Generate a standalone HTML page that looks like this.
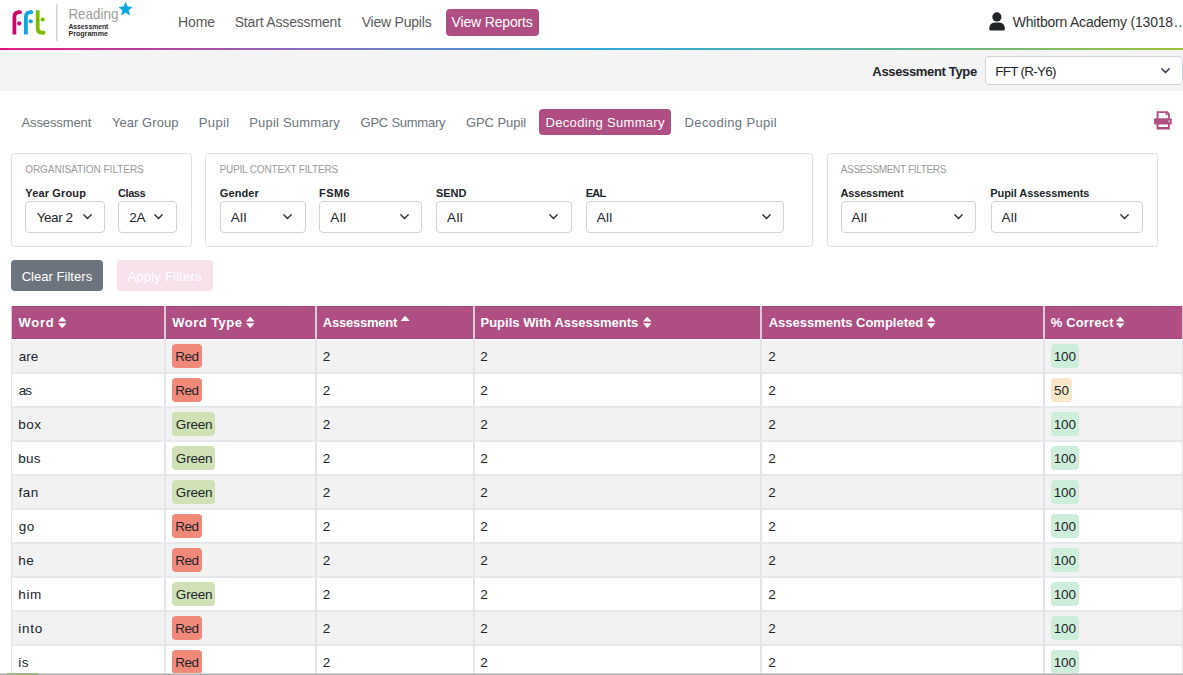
<!DOCTYPE html>
<html><head><meta charset="utf-8"><title>Decoding Summary</title><style>
*{box-sizing:border-box}
html,body{margin:0;padding:0;width:1183px;height:675px;overflow:hidden;background:#fff;font-family:"Liberation Sans",sans-serif}
.t{position:absolute;white-space:nowrap}
.a{position:absolute}
.box{position:absolute;border:1px solid #dee2e6;border-radius:4px;background:#fff}
.sel{position:absolute;border:1px solid #ced4da;border-radius:4px;background:#fff}
.chev{position:absolute;width:9px;height:6px}
.badge{position:absolute;border-radius:4px;height:24px}
</style></head><body>
<svg class="a" style="left:0;top:0" width="140" height="46" viewBox="0 0 140 46">
<g fill="none" stroke-width="3.8">
<path d="M14.4 34.6 L14.4 17 Q14.4 12.2 19.2 12.2 L20 12.2" stroke="#d5006f"/>
<path d="M25.9 34.6 L25.9 17 Q25.9 12.2 30.7 12.2 L31.3 12.2" stroke="#12a6e0"/>
<path d="M37.7 10.3 L37.7 28.5 Q37.7 32.7 41.9 32.7 L43.5 32.7" stroke="#7cba00"/>
</g>
<circle cx="20" cy="12.2" r="1.9" fill="#d5006f"/><circle cx="31.3" cy="12.2" r="1.9" fill="#12a6e0"/><circle cx="43.5" cy="32.7" r="1.9" fill="#7cba00"/>
<circle cx="19.2" cy="23.4" r="2.1" fill="#d5006f"/>
<circle cx="30.8" cy="21.3" r="2.1" fill="#12a6e0"/>
<circle cx="42.6" cy="19.5" r="2.1" fill="#7cba00"/>
<rect x="56" y="3.5" width="1.6" height="37.6" fill="#d6d6d6"/>
<text x="68.4" y="18.6" font-family="Liberation Sans" font-size="14.2" fill="#9c9c9c" textLength="50" lengthAdjust="spacingAndGlyphs">Reading</text>
<text x="68.4" y="28.5" font-family="Liberation Sans" font-size="6.6" font-weight="700" fill="#2a2a2a" textLength="40" lengthAdjust="spacingAndGlyphs">Assessment</text>
<text x="68.4" y="35.8" font-family="Liberation Sans" font-size="6.6" font-weight="700" fill="#2a2a2a" textLength="39.6" lengthAdjust="spacingAndGlyphs">Programme</text>
<path d="M125.60 2.40 L127.42 6.79 L132.16 7.17 L128.55 10.26 L129.66 14.88 L125.60 12.40 L121.54 14.88 L122.65 10.26 L119.04 7.17 L123.78 6.79 Z" fill="#0aa5e0" stroke="#0aa5e0" stroke-width="0.6" stroke-linejoin="round"/>
</svg>
<div class="a" style="left:445.5px;top:9.1px;width:93.3px;height:26.6px;background:#ae4e82;border-radius:4px"></div>
<svg class="a" style="left:988px;top:12px" width="18" height="20" viewBox="0 0 18 20">
<circle cx="8.9" cy="4.9" r="4.6" fill="#212529"/>
<path d="M1.2 17 Q1.2 10.6 7 10.5 L11 10.5 Q16.9 10.6 16.9 17 Q16.9 18.6 15.4 18.6 L2.7 18.6 Q1.2 18.6 1.2 17 Z" fill="#212529"/></svg>
<div class="a" style="left:0;top:48px;width:1183px;height:2px;background:linear-gradient(90deg,#e0187f 0%,#8d6cb8 25%,#2ea9dd 50%,#5fb395 76%,#9dc23a 100%)"></div>
<div class="a" style="left:0;top:50px;width:1183px;height:41px;background:#f4f4f4"></div>
<div class="sel" style="left:984.8px;top:56px;width:198px;height:28.5px"></div>
<svg class="chev" style="left:1160.5px;top:68px" viewBox="0 0 9 6"><path d="M0.8 0.8 L4.5 4.6 L8.2 0.8" fill="none" stroke="#343a40" stroke-width="1.5" stroke-linecap="round" stroke-linejoin="round"/></svg>
<div class="a" style="left:539px;top:109px;width:132px;height:26px;background:#ae4e82;border-radius:4px"></div>
<svg class="a" style="left:1153px;top:110px" width="20" height="20" viewBox="0 0 20 20">
<g fill="#ae4e82">
<path d="M3.6 1.2 L14.4 1.2 L16.8 3.6 L16.8 8.6 L14.9 8.6 L14.9 4.4 L13.8 3.1 L5.5 3.1 L5.5 8.6 L3.6 8.6 Z"/>
<rect x="12.6" y="3.1" width="1.9" height="2.1"/>
<rect x="1.1" y="8.3" width="17.6" height="6.2" rx="1"/>
<path d="M3.6 14 L5.5 14 L5.5 17 L14.9 17 L14.9 14 L16.8 14 L16.8 19.4 L3.6 19.4 Z"/>
</g>
<circle cx="16.2" cy="11.2" r="0.8" fill="#fff"/>
</svg>
<div class="box" style="left:11px;top:153px;width:181px;height:94px"></div>
<div class="box" style="left:205px;top:153px;width:608px;height:94px"></div>
<div class="box" style="left:826.5px;top:153px;width:331.5px;height:94px"></div>
<div class="sel" style="left:25.2px;top:201px;width:80.0px;height:32px"></div>
<svg class="chev" style="left:82.7px;top:214px" viewBox="0 0 9 6"><path d="M0.8 0.8 L4.5 4.6 L8.2 0.8" fill="none" stroke="#343a40" stroke-width="1.5" stroke-linecap="round" stroke-linejoin="round"/></svg>
<div class="sel" style="left:118.3px;top:201px;width:58.4px;height:32px"></div>
<svg class="chev" style="left:154.2px;top:214px" viewBox="0 0 9 6"><path d="M0.8 0.8 L4.5 4.6 L8.2 0.8" fill="none" stroke="#343a40" stroke-width="1.5" stroke-linecap="round" stroke-linejoin="round"/></svg>
<div class="sel" style="left:220px;top:201px;width:85.5px;height:32px"></div>
<svg class="chev" style="left:283.0px;top:214px" viewBox="0 0 9 6"><path d="M0.8 0.8 L4.5 4.6 L8.2 0.8" fill="none" stroke="#343a40" stroke-width="1.5" stroke-linecap="round" stroke-linejoin="round"/></svg>
<div class="sel" style="left:319.3px;top:201px;width:102.9px;height:32px"></div>
<svg class="chev" style="left:399.7px;top:214px" viewBox="0 0 9 6"><path d="M0.8 0.8 L4.5 4.6 L8.2 0.8" fill="none" stroke="#343a40" stroke-width="1.5" stroke-linecap="round" stroke-linejoin="round"/></svg>
<div class="sel" style="left:436.3px;top:201px;width:135.4px;height:32px"></div>
<svg class="chev" style="left:549.2px;top:214px" viewBox="0 0 9 6"><path d="M0.8 0.8 L4.5 4.6 L8.2 0.8" fill="none" stroke="#343a40" stroke-width="1.5" stroke-linecap="round" stroke-linejoin="round"/></svg>
<div class="sel" style="left:586.2px;top:201px;width:197.8px;height:32px"></div>
<svg class="chev" style="left:761.5px;top:214px" viewBox="0 0 9 6"><path d="M0.8 0.8 L4.5 4.6 L8.2 0.8" fill="none" stroke="#343a40" stroke-width="1.5" stroke-linecap="round" stroke-linejoin="round"/></svg>
<div class="sel" style="left:840.9px;top:201px;width:135.6px;height:32px"></div>
<svg class="chev" style="left:954.0px;top:214px" viewBox="0 0 9 6"><path d="M0.8 0.8 L4.5 4.6 L8.2 0.8" fill="none" stroke="#343a40" stroke-width="1.5" stroke-linecap="round" stroke-linejoin="round"/></svg>
<div class="sel" style="left:990.9px;top:201px;width:151.9px;height:32px"></div>
<svg class="chev" style="left:1120.3px;top:214px" viewBox="0 0 9 6"><path d="M0.8 0.8 L4.5 4.6 L8.2 0.8" fill="none" stroke="#343a40" stroke-width="1.5" stroke-linecap="round" stroke-linejoin="round"/></svg>
<div class="a" style="left:11px;top:259.7px;width:92px;height:31.5px;background:#6c757d;border-radius:4px"></div>
<div class="a" style="left:116.7px;top:259.7px;width:96.2px;height:31.5px;background:#f7e2ec;border-radius:4px"></div>
<div class="a" style="left:11.5px;top:305.5px;width:1171px;height:33.5px;background:#ae4e82;border-top:1px solid #a9457a;border-bottom:1.5px solid #a9457a"></div>
<div class="a" style="left:12px;top:340px;width:1170px;height:34px;background:#f2f2f2;border-bottom:2px solid #e7e8eb"></div>
<div class="badge" style="left:172px;top:344px;width:30px;background:#f0897a"></div>
<div class="badge" style="left:1051px;top:344px;width:28px;background:#ceeedc"></div>
<div class="a" style="left:12px;top:374px;width:1170px;height:34px;background:#fff;border-bottom:2px solid #e7e8eb"></div>
<div class="badge" style="left:172px;top:378px;width:30px;background:#f0897a"></div>
<div class="badge" style="left:1051px;top:378px;width:21px;background:#f8e6c9"></div>
<div class="a" style="left:12px;top:408px;width:1170px;height:34px;background:#f2f2f2;border-bottom:2px solid #e7e8eb"></div>
<div class="badge" style="left:172px;top:412px;width:43.4px;background:#d1e1b6"></div>
<div class="badge" style="left:1051px;top:412px;width:28px;background:#ceeedc"></div>
<div class="a" style="left:12px;top:442px;width:1170px;height:34px;background:#fff;border-bottom:2px solid #e7e8eb"></div>
<div class="badge" style="left:172px;top:446px;width:43.4px;background:#d1e1b6"></div>
<div class="badge" style="left:1051px;top:446px;width:28px;background:#ceeedc"></div>
<div class="a" style="left:12px;top:476px;width:1170px;height:34px;background:#f2f2f2;border-bottom:2px solid #e7e8eb"></div>
<div class="badge" style="left:172px;top:480px;width:43.4px;background:#d1e1b6"></div>
<div class="badge" style="left:1051px;top:480px;width:28px;background:#ceeedc"></div>
<div class="a" style="left:12px;top:510px;width:1170px;height:34px;background:#fff;border-bottom:2px solid #e7e8eb"></div>
<div class="badge" style="left:172px;top:514px;width:30px;background:#f0897a"></div>
<div class="badge" style="left:1051px;top:514px;width:28px;background:#ceeedc"></div>
<div class="a" style="left:12px;top:544px;width:1170px;height:34px;background:#f2f2f2;border-bottom:2px solid #e7e8eb"></div>
<div class="badge" style="left:172px;top:548px;width:30px;background:#f0897a"></div>
<div class="badge" style="left:1051px;top:548px;width:28px;background:#ceeedc"></div>
<div class="a" style="left:12px;top:578px;width:1170px;height:34px;background:#fff;border-bottom:2px solid #e7e8eb"></div>
<div class="badge" style="left:172px;top:582px;width:43.4px;background:#d1e1b6"></div>
<div class="badge" style="left:1051px;top:582px;width:28px;background:#ceeedc"></div>
<div class="a" style="left:12px;top:612px;width:1170px;height:34px;background:#f2f2f2;border-bottom:2px solid #e7e8eb"></div>
<div class="badge" style="left:172px;top:616px;width:30px;background:#f0897a"></div>
<div class="badge" style="left:1051px;top:616px;width:28px;background:#ceeedc"></div>
<div class="a" style="left:12px;top:646px;width:1170px;height:34px;background:#fff;border-bottom:2px solid #e7e8eb"></div>
<div class="badge" style="left:172px;top:650px;width:30px;background:#f0897a"></div>
<div class="badge" style="left:1051px;top:650px;width:28px;background:#ceeedc"></div>
<div class="a" style="left:11px;top:306px;width:1px;height:33px;background:#d8cbd2"></div>
<div class="a" style="left:11px;top:339px;width:1px;height:336px;background:#e4e5e8"></div>
<div class="a" style="left:164px;top:306px;width:2px;height:33px;background:#d8cbd2"></div>
<div class="a" style="left:164px;top:339px;width:2px;height:336px;background:#e4e5e8"></div>
<div class="a" style="left:315px;top:306px;width:2px;height:33px;background:#d8cbd2"></div>
<div class="a" style="left:315px;top:339px;width:2px;height:336px;background:#e4e5e8"></div>
<div class="a" style="left:473px;top:306px;width:2px;height:33px;background:#d8cbd2"></div>
<div class="a" style="left:473px;top:339px;width:2px;height:336px;background:#e4e5e8"></div>
<div class="a" style="left:760px;top:306px;width:2px;height:33px;background:#d8cbd2"></div>
<div class="a" style="left:760px;top:339px;width:2px;height:336px;background:#e4e5e8"></div>
<div class="a" style="left:1043px;top:306px;width:2px;height:33px;background:#d8cbd2"></div>
<div class="a" style="left:1043px;top:339px;width:2px;height:336px;background:#e4e5e8"></div>
<div class="a" style="left:1182px;top:306px;width:1px;height:33px;background:#d8cbd2"></div>
<div class="a" style="left:1182px;top:339px;width:1px;height:336px;background:#e4e5e8"></div>
<svg class="a" style="left:58.0px;top:316.6px" width="8.4" height="11" viewBox="0 0 8.4 11"><path d="M3.6 0.3 Q4.2 -0.3 4.8 0.3 L8.3 4.2 Q8.6 4.6 8 4.6 L0.4 4.6 Q-0.2 4.6 0.1 4.2 Z M0.4 6.2 L8 6.2 Q8.6 6.2 8.3 6.6 L4.8 10.5 Q4.2 11.1 3.6 10.5 L0.1 6.6 Q-0.2 6.2 0.4 6.2 Z" fill="#fff"/></svg>
<svg class="a" style="left:246.2px;top:316.6px" width="8.4" height="11" viewBox="0 0 8.4 11"><path d="M3.6 0.3 Q4.2 -0.3 4.8 0.3 L8.3 4.2 Q8.6 4.6 8 4.6 L0.4 4.6 Q-0.2 4.6 0.1 4.2 Z M0.4 6.2 L8 6.2 Q8.6 6.2 8.3 6.6 L4.8 10.5 Q4.2 11.1 3.6 10.5 L0.1 6.6 Q-0.2 6.2 0.4 6.2 Z" fill="#fff"/></svg>
<svg class="a" style="left:642.8px;top:316.6px" width="8.4" height="11" viewBox="0 0 8.4 11"><path d="M3.6 0.3 Q4.2 -0.3 4.8 0.3 L8.3 4.2 Q8.6 4.6 8 4.6 L0.4 4.6 Q-0.2 4.6 0.1 4.2 Z M0.4 6.2 L8 6.2 Q8.6 6.2 8.3 6.6 L4.8 10.5 Q4.2 11.1 3.6 10.5 L0.1 6.6 Q-0.2 6.2 0.4 6.2 Z" fill="#fff"/></svg>
<svg class="a" style="left:927.3px;top:316.6px" width="8.4" height="11" viewBox="0 0 8.4 11"><path d="M3.6 0.3 Q4.2 -0.3 4.8 0.3 L8.3 4.2 Q8.6 4.6 8 4.6 L0.4 4.6 Q-0.2 4.6 0.1 4.2 Z M0.4 6.2 L8 6.2 Q8.6 6.2 8.3 6.6 L4.8 10.5 Q4.2 11.1 3.6 10.5 L0.1 6.6 Q-0.2 6.2 0.4 6.2 Z" fill="#fff"/></svg>
<svg class="a" style="left:1116.4px;top:316.6px" width="8.4" height="11" viewBox="0 0 8.4 11"><path d="M3.6 0.3 Q4.2 -0.3 4.8 0.3 L8.3 4.2 Q8.6 4.6 8 4.6 L0.4 4.6 Q-0.2 4.6 0.1 4.2 Z M0.4 6.2 L8 6.2 Q8.6 6.2 8.3 6.6 L4.8 10.5 Q4.2 11.1 3.6 10.5 L0.1 6.6 Q-0.2 6.2 0.4 6.2 Z" fill="#fff"/></svg>
<svg class="a" style="left:401.2px;top:316.4px" width="8.4" height="5.4" viewBox="0 0 8.4 5.4"><path d="M3.6 0.3 Q4.2 -0.3 4.8 0.3 L8.3 4.6 Q8.6 5.1 8 5.1 L0.4 5.1 Q-0.2 5.1 0.1 4.6 Z" fill="#fff"/></svg>
<div class="a" style="left:0;top:673px;width:1183px;height:1px;background:#d6d6d6"></div>
<div class="a" style="left:0;top:674px;width:1183px;height:1px;background:#ababab"></div>
<div class="a" style="left:7px;top:673px;width:30.5px;height:2px;background:#a2b784"></div>
<div class="t" style="left:177.92px;top:14.75px;font-size:14px;line-height:14px;font-weight:400;color:#5a5a5a;letter-spacing:-0.059px">Home</div>
<div class="t" style="left:234.68px;top:14.75px;font-size:14px;line-height:14px;font-weight:400;color:#5a5a5a;letter-spacing:-0.171px">Start Assessment</div>
<div class="t" style="left:361.66px;top:14.75px;font-size:14px;line-height:14px;font-weight:400;color:#5a5a5a;letter-spacing:-0.211px">View Pupils</div>
<div class="t" style="left:451.58px;top:14.75px;font-size:14px;line-height:14px;font-weight:400;color:#fff;letter-spacing:-0.167px">View Reports</div>
<div class="t" style="left:1012.78px;top:14.95px;font-size:14px;line-height:14px;font-weight:400;color:#333;letter-spacing:-0.213px">Whitborn Academy (13018</div>
<div class="t" style="left:1173.90px;top:14.95px;font-size:14px;line-height:14px;font-weight:400;color:#333;letter-spacing:0.600px">...</div>
<div class="t" style="left:872.36px;top:64.70px;font-size:13px;line-height:13px;font-weight:700;color:#212529;letter-spacing:-0.342px">Assessment Type</div>
<div class="t" style="left:995.26px;top:65.27px;font-size:13.5px;line-height:13.5px;font-weight:400;color:#212529;letter-spacing:-0.740px">FFT (R-Y6)</div>
<div class="t" style="left:21.47px;top:116.00px;font-size:13px;line-height:13px;font-weight:400;color:#6c757d;letter-spacing:-0.104px">Assessment</div>
<div class="t" style="left:112.03px;top:116.00px;font-size:13px;line-height:13px;font-weight:400;color:#6c757d;letter-spacing:0.046px">Year Group</div>
<div class="t" style="left:198.78px;top:116.00px;font-size:13px;line-height:13px;font-weight:400;color:#6c757d;letter-spacing:0.381px">Pupil</div>
<div class="t" style="left:249.22px;top:116.00px;font-size:13px;line-height:13px;font-weight:400;color:#6c757d;letter-spacing:0.209px">Pupil Summary</div>
<div class="t" style="left:360.58px;top:116.00px;font-size:13px;line-height:13px;font-weight:400;color:#6c757d;letter-spacing:-0.246px">GPC Summary</div>
<div class="t" style="left:465.96px;top:116.00px;font-size:13px;line-height:13px;font-weight:400;color:#6c757d;letter-spacing:-0.069px">GPC Pupil</div>
<div class="t" style="left:545.55px;top:116.00px;font-size:13px;line-height:13px;font-weight:400;color:#fff;letter-spacing:0.319px">Decoding Summary</div>
<div class="t" style="left:684.59px;top:116.00px;font-size:13px;line-height:13px;font-weight:400;color:#6c757d;letter-spacing:0.363px">Decoding Pupil</div>
<div class="t" style="left:25.15px;top:165.44px;font-size:10px;line-height:10px;font-weight:400;color:#999;letter-spacing:-0.024px">ORGANISATION FILTERS</div>
<div class="t" style="left:219.41px;top:165.44px;font-size:10px;line-height:10px;font-weight:400;color:#999;letter-spacing:-0.167px">PUPIL CONTEXT FILTERS</div>
<div class="t" style="left:840.75px;top:165.44px;font-size:10px;line-height:10px;font-weight:400;color:#999;letter-spacing:-0.333px">ASSESSMENT FILTERS</div>
<div class="t" style="left:25.25px;top:188.29px;font-size:11px;line-height:11px;font-weight:700;color:#212529;letter-spacing:0.149px">Year Group</div>
<div class="t" style="left:118.12px;top:188.29px;font-size:11px;line-height:11px;font-weight:700;color:#212529;letter-spacing:-0.479px">Class</div>
<div class="t" style="left:219.77px;top:188.29px;font-size:11px;line-height:11px;font-weight:700;color:#212529;letter-spacing:0.109px">Gender</div>
<div class="t" style="left:319.02px;top:188.29px;font-size:11px;line-height:11px;font-weight:700;color:#212529;letter-spacing:0.424px">FSM6</div>
<div class="t" style="left:436.02px;top:188.29px;font-size:11px;line-height:11px;font-weight:700;color:#212529;letter-spacing:-0.065px">SEND</div>
<div class="t" style="left:585.63px;top:188.29px;font-size:11px;line-height:11px;font-weight:700;color:#212529;letter-spacing:-0.677px">EAL</div>
<div class="t" style="left:840.59px;top:188.29px;font-size:11px;line-height:11px;font-weight:700;color:#212529;letter-spacing:-0.205px">Assessment</div>
<div class="t" style="left:990.26px;top:188.29px;font-size:11px;line-height:11px;font-weight:700;color:#212529;letter-spacing:-0.086px">Pupil Assessments</div>
<div class="t" style="left:36.71px;top:210.57px;font-size:13.5px;line-height:13.5px;font-weight:400;color:#212529;letter-spacing:-0.438px">Year 2</div>
<div class="t" style="left:129.14px;top:210.57px;font-size:13.5px;line-height:13.5px;font-weight:400;color:#212529;letter-spacing:-0.070px">2A</div>
<div class="t" style="left:230.69px;top:210.57px;font-size:13.5px;line-height:13.5px;font-weight:400;color:#212529;letter-spacing:0.398px">All</div>
<div class="t" style="left:330.18px;top:210.57px;font-size:13.5px;line-height:13.5px;font-weight:400;color:#212529;letter-spacing:0.469px">All</div>
<div class="t" style="left:447.01px;top:210.57px;font-size:13.5px;line-height:13.5px;font-weight:400;color:#212529;letter-spacing:0.410px">All</div>
<div class="t" style="left:596.66px;top:210.57px;font-size:13.5px;line-height:13.5px;font-weight:400;color:#212529;letter-spacing:0.329px">All</div>
<div class="t" style="left:851.43px;top:210.57px;font-size:13.5px;line-height:13.5px;font-weight:400;color:#212529;letter-spacing:0.239px">All</div>
<div class="t" style="left:1001.43px;top:210.57px;font-size:13.5px;line-height:13.5px;font-weight:400;color:#212529;letter-spacing:0.239px">All</div>
<div class="t" style="left:21.65px;top:269.70px;font-size:13px;line-height:13px;font-weight:400;color:#fff;letter-spacing:0.035px">Clear Filters</div>
<div class="t" style="left:127.47px;top:269.70px;font-size:13px;line-height:13px;font-weight:400;color:#fff;letter-spacing:0.219px">Apply Filters</div>
<div class="t" style="left:18.57px;top:315.80px;font-size:13px;line-height:13px;font-weight:700;color:#fff;letter-spacing:0.700px">Word</div>
<div class="t" style="left:172.24px;top:315.80px;font-size:13px;line-height:13px;font-weight:700;color:#fff;letter-spacing:0.462px">Word Type</div>
<div class="t" style="left:322.77px;top:315.80px;font-size:13px;line-height:13px;font-weight:700;color:#fff;letter-spacing:-0.231px">Assessment</div>
<div class="t" style="left:480.49px;top:315.80px;font-size:13px;line-height:13px;font-weight:700;color:#fff;letter-spacing:0.011px">Pupils With Assessments</div>
<div class="t" style="left:768.71px;top:315.80px;font-size:13px;line-height:13px;font-weight:700;color:#fff;letter-spacing:-0.008px">Assessments Completed</div>
<div class="t" style="left:1050.64px;top:315.80px;font-size:13px;line-height:13px;font-weight:700;color:#fff;letter-spacing:0.185px">% Correct</div>
<div class="t" style="left:18.65px;top:349.77px;font-size:13.5px;line-height:13.5px;font-weight:400;color:#212529;letter-spacing:0.105px">are</div>
<div class="t" style="left:175.32px;top:349.77px;font-size:13.5px;line-height:13.5px;font-weight:400;color:#212529;letter-spacing:-0.498px">Red</div>
<div class="t" style="left:322.64px;top:349.77px;font-size:13.5px;line-height:13.5px;font-weight:400;color:#212529;letter-spacing:0.000px">2</div>
<div class="t" style="left:480.34px;top:349.77px;font-size:13.5px;line-height:13.5px;font-weight:400;color:#212529;letter-spacing:0.000px">2</div>
<div class="t" style="left:768.34px;top:349.77px;font-size:13.5px;line-height:13.5px;font-weight:400;color:#212529;letter-spacing:0.000px">2</div>
<div class="t" style="left:1053.65px;top:349.77px;font-size:13.5px;line-height:13.5px;font-weight:400;color:#212529;letter-spacing:-0.062px">100</div>
<div class="t" style="left:18.65px;top:383.77px;font-size:13.5px;line-height:13.5px;font-weight:400;color:#212529;letter-spacing:-0.900px">as</div>
<div class="t" style="left:175.32px;top:383.77px;font-size:13.5px;line-height:13.5px;font-weight:400;color:#212529;letter-spacing:-0.498px">Red</div>
<div class="t" style="left:322.64px;top:383.77px;font-size:13.5px;line-height:13.5px;font-weight:400;color:#212529;letter-spacing:0.000px">2</div>
<div class="t" style="left:480.34px;top:383.77px;font-size:13.5px;line-height:13.5px;font-weight:400;color:#212529;letter-spacing:0.000px">2</div>
<div class="t" style="left:768.34px;top:383.77px;font-size:13.5px;line-height:13.5px;font-weight:400;color:#212529;letter-spacing:0.000px">2</div>
<div class="t" style="left:1053.91px;top:383.77px;font-size:13.5px;line-height:13.5px;font-weight:400;color:#212529;letter-spacing:0.149px">50</div>
<div class="t" style="left:18.35px;top:417.77px;font-size:13.5px;line-height:13.5px;font-weight:400;color:#212529;letter-spacing:0.493px">box</div>
<div class="t" style="left:175.87px;top:417.77px;font-size:13.5px;line-height:13.5px;font-weight:400;color:#212529;letter-spacing:-0.220px">Green</div>
<div class="t" style="left:322.64px;top:417.77px;font-size:13.5px;line-height:13.5px;font-weight:400;color:#212529;letter-spacing:0.000px">2</div>
<div class="t" style="left:480.34px;top:417.77px;font-size:13.5px;line-height:13.5px;font-weight:400;color:#212529;letter-spacing:0.000px">2</div>
<div class="t" style="left:768.34px;top:417.77px;font-size:13.5px;line-height:13.5px;font-weight:400;color:#212529;letter-spacing:0.000px">2</div>
<div class="t" style="left:1053.65px;top:417.77px;font-size:13.5px;line-height:13.5px;font-weight:400;color:#212529;letter-spacing:-0.062px">100</div>
<div class="t" style="left:18.35px;top:451.77px;font-size:13.5px;line-height:13.5px;font-weight:400;color:#212529;letter-spacing:0.173px">bus</div>
<div class="t" style="left:175.87px;top:451.77px;font-size:13.5px;line-height:13.5px;font-weight:400;color:#212529;letter-spacing:-0.220px">Green</div>
<div class="t" style="left:322.64px;top:451.77px;font-size:13.5px;line-height:13.5px;font-weight:400;color:#212529;letter-spacing:0.000px">2</div>
<div class="t" style="left:480.34px;top:451.77px;font-size:13.5px;line-height:13.5px;font-weight:400;color:#212529;letter-spacing:0.000px">2</div>
<div class="t" style="left:768.34px;top:451.77px;font-size:13.5px;line-height:13.5px;font-weight:400;color:#212529;letter-spacing:0.000px">2</div>
<div class="t" style="left:1053.65px;top:451.77px;font-size:13.5px;line-height:13.5px;font-weight:400;color:#212529;letter-spacing:-0.062px">100</div>
<div class="t" style="left:18.47px;top:485.77px;font-size:13.5px;line-height:13.5px;font-weight:400;color:#212529;letter-spacing:0.557px">fan</div>
<div class="t" style="left:175.87px;top:485.77px;font-size:13.5px;line-height:13.5px;font-weight:400;color:#212529;letter-spacing:-0.220px">Green</div>
<div class="t" style="left:322.64px;top:485.77px;font-size:13.5px;line-height:13.5px;font-weight:400;color:#212529;letter-spacing:0.000px">2</div>
<div class="t" style="left:480.34px;top:485.77px;font-size:13.5px;line-height:13.5px;font-weight:400;color:#212529;letter-spacing:0.000px">2</div>
<div class="t" style="left:768.34px;top:485.77px;font-size:13.5px;line-height:13.5px;font-weight:400;color:#212529;letter-spacing:0.000px">2</div>
<div class="t" style="left:1053.65px;top:485.77px;font-size:13.5px;line-height:13.5px;font-weight:400;color:#212529;letter-spacing:-0.062px">100</div>
<div class="t" style="left:18.66px;top:519.77px;font-size:13.5px;line-height:13.5px;font-weight:400;color:#212529;letter-spacing:0.700px">go</div>
<div class="t" style="left:175.32px;top:519.77px;font-size:13.5px;line-height:13.5px;font-weight:400;color:#212529;letter-spacing:-0.498px">Red</div>
<div class="t" style="left:322.64px;top:519.77px;font-size:13.5px;line-height:13.5px;font-weight:400;color:#212529;letter-spacing:0.000px">2</div>
<div class="t" style="left:480.34px;top:519.77px;font-size:13.5px;line-height:13.5px;font-weight:400;color:#212529;letter-spacing:0.000px">2</div>
<div class="t" style="left:768.34px;top:519.77px;font-size:13.5px;line-height:13.5px;font-weight:400;color:#212529;letter-spacing:0.000px">2</div>
<div class="t" style="left:1053.65px;top:519.77px;font-size:13.5px;line-height:13.5px;font-weight:400;color:#212529;letter-spacing:-0.062px">100</div>
<div class="t" style="left:18.27px;top:553.77px;font-size:13.5px;line-height:13.5px;font-weight:400;color:#212529;letter-spacing:0.516px">he</div>
<div class="t" style="left:175.32px;top:553.77px;font-size:13.5px;line-height:13.5px;font-weight:400;color:#212529;letter-spacing:-0.498px">Red</div>
<div class="t" style="left:322.64px;top:553.77px;font-size:13.5px;line-height:13.5px;font-weight:400;color:#212529;letter-spacing:0.000px">2</div>
<div class="t" style="left:480.34px;top:553.77px;font-size:13.5px;line-height:13.5px;font-weight:400;color:#212529;letter-spacing:0.000px">2</div>
<div class="t" style="left:768.34px;top:553.77px;font-size:13.5px;line-height:13.5px;font-weight:400;color:#212529;letter-spacing:0.000px">2</div>
<div class="t" style="left:1053.65px;top:553.77px;font-size:13.5px;line-height:13.5px;font-weight:400;color:#212529;letter-spacing:-0.062px">100</div>
<div class="t" style="left:18.27px;top:587.77px;font-size:13.5px;line-height:13.5px;font-weight:400;color:#212529;letter-spacing:0.667px">him</div>
<div class="t" style="left:175.87px;top:587.77px;font-size:13.5px;line-height:13.5px;font-weight:400;color:#212529;letter-spacing:-0.220px">Green</div>
<div class="t" style="left:322.64px;top:587.77px;font-size:13.5px;line-height:13.5px;font-weight:400;color:#212529;letter-spacing:0.000px">2</div>
<div class="t" style="left:480.34px;top:587.77px;font-size:13.5px;line-height:13.5px;font-weight:400;color:#212529;letter-spacing:0.000px">2</div>
<div class="t" style="left:768.34px;top:587.77px;font-size:13.5px;line-height:13.5px;font-weight:400;color:#212529;letter-spacing:0.000px">2</div>
<div class="t" style="left:1053.65px;top:587.77px;font-size:13.5px;line-height:13.5px;font-weight:400;color:#212529;letter-spacing:-0.062px">100</div>
<div class="t" style="left:18.35px;top:621.77px;font-size:13.5px;line-height:13.5px;font-weight:400;color:#212529;letter-spacing:0.700px">into</div>
<div class="t" style="left:175.32px;top:621.77px;font-size:13.5px;line-height:13.5px;font-weight:400;color:#212529;letter-spacing:-0.498px">Red</div>
<div class="t" style="left:322.64px;top:621.77px;font-size:13.5px;line-height:13.5px;font-weight:400;color:#212529;letter-spacing:0.000px">2</div>
<div class="t" style="left:480.34px;top:621.77px;font-size:13.5px;line-height:13.5px;font-weight:400;color:#212529;letter-spacing:0.000px">2</div>
<div class="t" style="left:768.34px;top:621.77px;font-size:13.5px;line-height:13.5px;font-weight:400;color:#212529;letter-spacing:0.000px">2</div>
<div class="t" style="left:1053.65px;top:621.77px;font-size:13.5px;line-height:13.5px;font-weight:400;color:#212529;letter-spacing:-0.062px">100</div>
<div class="t" style="left:18.35px;top:655.77px;font-size:13.5px;line-height:13.5px;font-weight:400;color:#212529;letter-spacing:0.365px">is</div>
<div class="t" style="left:175.32px;top:655.77px;font-size:13.5px;line-height:13.5px;font-weight:400;color:#212529;letter-spacing:-0.498px">Red</div>
<div class="t" style="left:322.64px;top:655.77px;font-size:13.5px;line-height:13.5px;font-weight:400;color:#212529;letter-spacing:0.000px">2</div>
<div class="t" style="left:480.34px;top:655.77px;font-size:13.5px;line-height:13.5px;font-weight:400;color:#212529;letter-spacing:0.000px">2</div>
<div class="t" style="left:768.34px;top:655.77px;font-size:13.5px;line-height:13.5px;font-weight:400;color:#212529;letter-spacing:0.000px">2</div>
<div class="t" style="left:1053.65px;top:655.77px;font-size:13.5px;line-height:13.5px;font-weight:400;color:#212529;letter-spacing:-0.062px">100</div>
</body></html>
